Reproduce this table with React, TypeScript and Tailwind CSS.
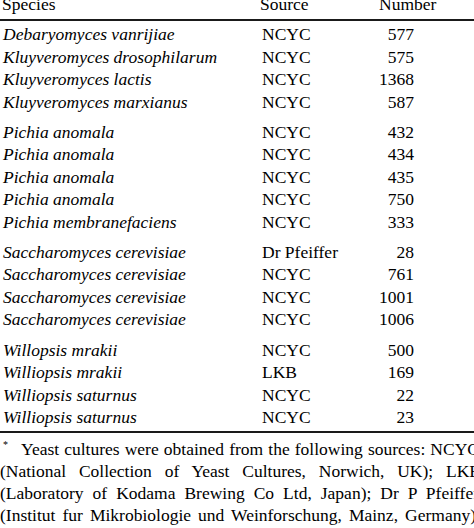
const groups: [string, string, string][][] = [
  [
    ['Debaryomyces vanrijiae', 'NCYC', '577'],
    ['Kluyveromyces drosophilarum', 'NCYC', '575'],
    ['Kluyveromyces lactis', 'NCYC', '1368'],
    ['Kluyveromyces marxianus', 'NCYC', '587'],
  ],
  [
    ['Pichia anomala', 'NCYC', '432'],
    ['Pichia anomala', 'NCYC', '434'],
    ['Pichia anomala', 'NCYC', '435'],
    ['Pichia anomala', 'NCYC', '750'],
    ['Pichia membranefaciens', 'NCYC', '333'],
  ],
  [
    ['Saccharomyces cerevisiae', 'Dr Pfeiffer', '28'],
    ['Saccharomyces cerevisiae', 'NCYC', '761'],
    ['Saccharomyces cerevisiae', 'NCYC', '1001'],
    ['Saccharomyces cerevisiae', 'NCYC', '1006'],
  ],
  [
    ['Willopsis mrakii', 'NCYC', '500'],
    ['Williopsis mrakii', 'LKB', '169'],
    ['Williopsis saturnus', 'NCYC', '22'],
    ['Williopsis saturnus', 'NCYC', '23'],
  ],
];

export default function App() {
  return (
    <div
      className="h-[528px] w-[474px] overflow-hidden bg-white text-[17.5px] leading-[22.4px] text-black"
      style={{ fontFamily: '"Liberation Serif", "Times New Roman", serif' }}
    >
      <div className="-mt-[7px] grid grid-cols-[258px_119px_auto] pl-[2px]">
        <div>Species</div>
        <div>Source</div>
        <div>Number</div>
      </div>
      <div className="mt-[4px] h-[2px] bg-[#1a1a1a]" />

      <div className="flex flex-col gap-[8px] pl-[3px] pt-[2px]">
        {groups.map((rows, gi) => (
          <div key={gi}>
            {rows.map(([species, source, num], i) => (
              <div key={i} className="grid grid-cols-[259px_94px_58px]">
                <div className="italic">{species}</div>
                <div>{source}</div>
                <div className="text-right">{num}</div>
              </div>
            ))}
          </div>
        ))}
      </div>

      <div className="mt-[3px] h-[2px] bg-[#1a1a1a]" />

      <div className="pt-[5px] leading-[22px]">
        <div className="flex w-[479px]">
          <span className="w-[21px] pl-[3px] text-[10px] leading-[14px]">*</span>
          <span className="flex-1 text-justify [text-align-last:justify]">
            Yeast cultures were obtained from the following sources: NCYC
          </span>
        </div>
        <div className="w-[481px] text-justify [text-align-last:justify]">
          (National Collection of Yeast Cultures, Norwich, UK); LKB
        </div>
        <div className="w-[479px] text-justify [text-align-last:justify]">
          (Laboratory of Kodama Brewing Co Ltd, Japan); Dr P Pfeiffer
        </div>
        <div className="w-[476px] text-justify [text-align-last:justify]">
          (Institut fur Mikrobiologie und Weinforschung, Mainz, Germany)
        </div>
      </div>
    </div>
  );
}
